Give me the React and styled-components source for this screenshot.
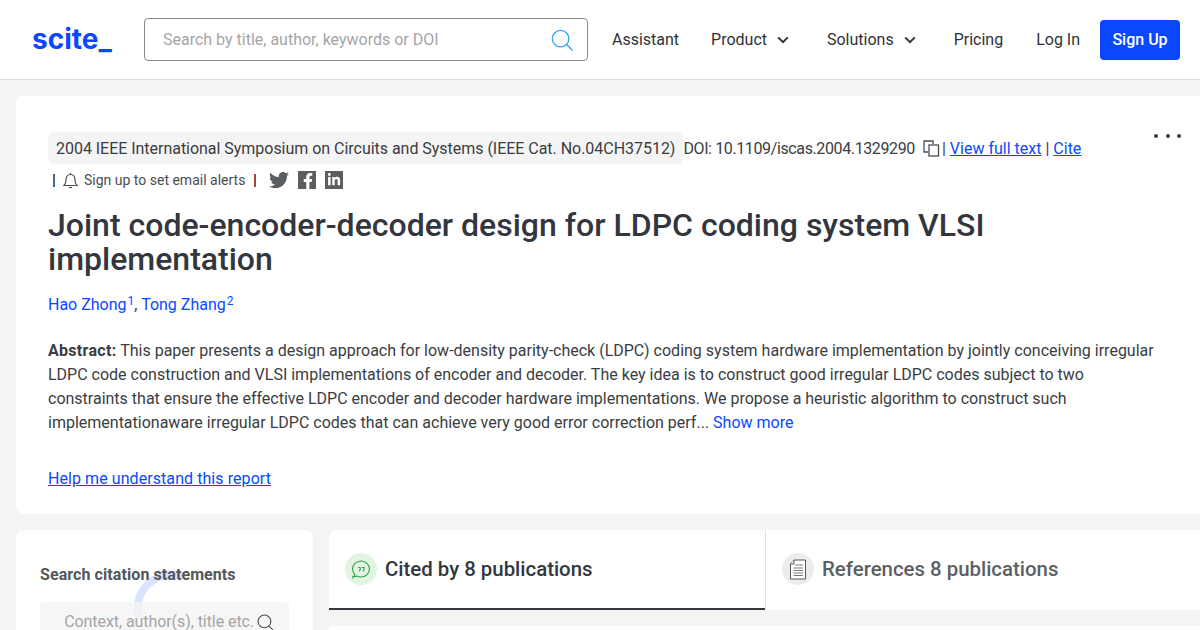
import React from 'react';
import styled, { createGlobalStyle } from 'styled-components';
import { FaTwitter, FaFacebookF, FaLinkedinIn } from 'react-icons/fa';

const GlobalStyle = createGlobalStyle`
  html, body {
    margin: 0;
    padding: 0;
    width: 1200px;
    height: 630px;
    overflow: hidden;
    background: #f4f4f4;
    font-family: "Roboto", "Liberation Sans", sans-serif;
    color: #33373d;
  }
  * { box-sizing: border-box; }
`;

const Header = styled.header`
  height: 80px;
  background: #fff;
  border-bottom: 1px solid #dcdcdc;
  display: flex;
  align-items: center;
  padding: 0 20px 0 32px;
`;

const Logo = styled.div`
  width: 112px;
  font-family: "Inter", sans-serif;
  font-size: 28px;
  font-weight: 700;
  color: #0a48ff;
  letter-spacing: 0;
  transform: translateY(-1px);
`;

const SearchBox = styled.div`
  width: 444px;
  height: 43px;
  border: 1px solid #8a8a8a;
  border-radius: 4px;
  display: flex;
  align-items: center;
  justify-content: space-between;
  padding: 0 14px 0 18px;
  font-size: 16px;
  color: #a5a5a5;
`;

const Nav = styled.nav`
  display: flex;
  align-items: center;
  margin-left: 24px;
  font-size: 16px;
`;

const NavItem = styled.span`
  display: flex;
  align-items: center;
  gap: 10px;
  margin-right: ${(p) => p.$gap}px;
  color: #2f3237;
`;

const SignUp = styled.span`
  width: 80px;
  height: 40px;
  border-radius: 4px;
  background: #0a48ff;
  color: #fff;
  font-weight: 500;
  display: flex;
  align-items: center;
  justify-content: center;
`;

const Page = styled.main`
  padding: 16px 0 0 16px;
  display: flex;
  flex-direction: column;
  gap: 16px;
`;

const PaperCard = styled.section`
  height: 418px;
  background: #fff;
  border-radius: 8px 0 0 8px;
  padding: 36px 32px 0;
  position: relative;
`;

const MetaRow = styled.div`
  display: flex;
  align-items: center;
  font-size: 16px;
  height: 32px;
  color: #3a3d42;
`;

const Venue = styled.span`
  background: #f4f4f4;
  border-radius: 6px;
  height: 32px;
  padding: 0 8px;
  display: flex;
  align-items: center;
  letter-spacing: -0.03px;
`;

const Doi = styled.span`
  letter-spacing: -0.38px;
`;

const CopyIcon = styled.svg`
  margin: 0 2px 0 8px;
`;

const TextLink = styled.a`
  color: #0a48ff;
  text-decoration: underline;
`;

const Pipe = styled.span`
  margin: 0 ${(p) => p.$right ?? 4}px 0 ${(p) => p.$left ?? 4}px;
`;

const MoreDots = styled.div`
  position: absolute;
  top: 38px;
  right: 19px;
  display: flex;
  gap: 7.5px;
`;

const Dot = styled.i`
  width: 4px;
  height: 4px;
  border-radius: 50%;
  background: #3a3d42;
`;

const AlertRow = styled.div`
  display: flex;
  align-items: center;
  height: 32px;
  font-size: 14px;
  color: #4a4d52;
`;

const AlertText = styled.span`
  margin-left: 6px;
`;

const Divider = styled.span`
  width: 2px;
  height: 13px;
  background: ${(p) => p.$color};
  margin: 0 ${(p) => p.$right}px 0 ${(p) => p.$left}px;
`;

const Socials = styled.div`
  display: flex;
  align-items: center;
  gap: 9px;
  color: #5a5e61;
`;

const SocialSquare = styled.span`
  width: 18px;
  height: 18px;
  background: #5a5e61;
  color: #fff;
  display: flex;
  align-items: ${(p) => (p.$bottom ? 'flex-end' : 'center')};
  justify-content: ${(p) => (p.$bottom ? 'flex-end' : 'center')};
  overflow: hidden;
`;

const Title = styled.h1`
  margin: 12px 0 0;
  font-size: 32px;
  line-height: 34px;
  font-weight: 500;
  color: #33373d;
`;

const Authors = styled.div`
  margin-top: 17px;
  font-size: 16px;
  line-height: 24px;
  color: #33373d;
  a { color: #0a48ff; }
`;

const AuthorMark = styled.sup`
  font-size: 12px;
  line-height: 0;
  margin-left: 1px;
  color: #0a48ff;
  vertical-align: 5px;
`;

const Abstract = styled.p`
  margin: 22px 0 0;
  padding-right: 8px;
  font-size: 16px;
  line-height: 24px;
  color: #3a3d42;
  b { font-weight: 700; letter-spacing: 0.3px; }
  a { color: #0a48ff; }
`;

const HelpLink = styled(TextLink)`
  display: block;
  margin-top: 32px;
  font-size: 16px;
  line-height: 24px;
  letter-spacing: 0.07px;
`;

const Lower = styled.div`
  display: flex;
  gap: 16px;
  align-items: flex-start;
`;

const Sidebar = styled.aside`
  width: 297px;
  height: 100px;
  overflow: hidden;
  background: #fff;
  border-radius: 8px 8px 0 0;
  padding: 36px 24px 0;
  position: relative;
`;

const SidebarTitle = styled.div`
  position: relative;
  z-index: 1;
  font-size: 16px;
  line-height: 18px;
  font-weight: 700;
  letter-spacing: 0.08px;
  color: #53565a;
`;

const SidebarSearch = styled.div`
  position: relative;
  z-index: 1;
  margin-top: 18px;
  height: 28px;
  background: rgba(244, 244, 244, 0.8);
  border-radius: 4px 4px 0 0;
  display: flex;
  align-items: flex-start;
  justify-content: flex-end;
  gap: 3px;
  padding: 12px 15px 0 0;
  font-size: 16px;
  line-height: 16px;
  letter-spacing: -0.07px;
  color: #a5a5a5;
`;

const Spinner = styled.svg`
  position: absolute;
  top: 40px;
  left: 117px;
`;

const TabsColumn = styled.div`
  flex: 1;
`;

const Tabs = styled.div`
  display: flex;
  height: 80px;
`;

const Tab = styled.div`
  width: ${(p) => p.$width}px;
  flex: ${(p) => (p.$grow ? 1 : 'none')};
  background: #fff;
  border-radius: ${(p) => (p.$first ? '8px 0 0 0' : '0')};
  border-bottom: 2px solid ${(p) => (p.$active ? '#33373d' : '#fff')};
  border-left: ${(p) => (p.$first ? 'none' : '1px solid #e2e2e2')};
  padding-left: 16px;
  display: flex;
  align-items: center;
  gap: 8px;
  font-size: 20.4px;
  font-weight: 500;
  color: ${(p) => (p.$active ? '#33373d' : '#5c5f63')};
`;

const TabIcon = styled.span`
  width: 32px;
  height: 32px;
  border-radius: 50%;
  background: ${(p) => p.$bg};
  display: flex;
  align-items: center;
  justify-content: center;
`;

const TabPanel = styled.div`
  margin-top: 16px;
  height: 4px;
  background: #fff;
  border-radius: 8px 0 0 0;
`;

function SearchGlass({ size, color, width = 1.5 }) {
  return (
    <svg width={size} height={size} viewBox="0 0 24 24" fill="none" stroke={color} strokeWidth={width} strokeLinecap="round">
      <circle cx="10.5" cy="10.5" r="9" />
      <path d="M17 17l6 6" />
    </svg>
  );
}

function Chevron() {
  return (
    <svg width="12" height="8" viewBox="0 0 12 8" fill="none" stroke="#2f3237" strokeWidth="2">
      <path d="M1.2 1.4L6 6.2l4.8-4.8" />
    </svg>
  );
}

export default function App() {
  return (
    <>
      <GlobalStyle />
      <Header>
        <Logo>scite_</Logo>
        <SearchBox>
          Search by title, author, keywords or DOI
          <SearchGlass size={22} color="#2fa8f5" />
        </SearchBox>
        <Nav>
          <NavItem $gap={32}>Assistant</NavItem>
          <NavItem $gap={38}>Product <Chevron /></NavItem>
          <NavItem $gap={38}>Solutions <Chevron /></NavItem>
          <NavItem $gap={33}>Pricing</NavItem>
          <NavItem $gap={20}>Log In</NavItem>
          <SignUp>Sign Up</SignUp>
        </Nav>
      </Header>
      <Page>
        <PaperCard>
          <MoreDots><Dot /><Dot /><Dot /></MoreDots>
          <MetaRow>
            <Venue>2004 IEEE International Symposium on Circuits and Systems (IEEE Cat. No.04CH37512)</Venue>
            <Doi>DOI: 10.1109/iscas.2004.1329290</Doi>
            <CopyIcon width="17" height="17" viewBox="0 0 17 17" fill="none" stroke="#4a4d52" strokeWidth="1.3">
              <path d="M5 12H1V1h9v3" />
              <rect x="6" y="5" width="9.5" height="11" />
            </CopyIcon>
            <Pipe $left={0} $right={4}>|</Pipe>
            <TextLink>View full text</TextLink>
            <Pipe>|</Pipe>
            <TextLink>Cite</TextLink>
          </MetaRow>
          <AlertRow>
            <Divider $color="#3f6c96" $left={5} $right={8} />
            <svg width="15" height="17" viewBox="0 0 15 17" fill="none" stroke="#4a4d52" strokeWidth="1.2">
              <path d="M1 13.5h13c-1.5-1.4-2-2.5-2-5.5 0-3-1.6-5.5-4.5-5.5S3 5 3 8c0 3-.5 4.1-2 5.5z" />
              <path d="M6 15.5h3" />
              <path d="M7.5 1v1.5" />
            </svg>
            <AlertText>Sign up to set email alerts</AlertText>
            <Divider $color="#a3463c" $left={9} $right={13} />
            <Socials>
              <FaTwitter size={20} />
              <SocialSquare $bottom><FaFacebookF size={16} /></SocialSquare>
              <SocialSquare><FaLinkedinIn size={14} /></SocialSquare>
            </Socials>
          </AlertRow>
          <Title>Joint code-encoder-decoder design for LDPC coding system VLSI implementation</Title>
          <Authors>
            <a>Hao Zhong</a><AuthorMark>1</AuthorMark>, <a>Tong Zhang</a><AuthorMark>2</AuthorMark>
          </Authors>
          <Abstract>
            <b>Abstract:</b> This paper presents a design approach for low-density parity-check (LDPC) coding system hardware implementation by jointly conceiving irregular LDPC code construction and VLSI implementations of encoder and decoder. The key idea is to construct good irregular LDPC codes subject to two constraints that ensure the effective LDPC encoder and decoder hardware implementations. We propose a heuristic algorithm to construct such implementationaware irregular LDPC codes that can achieve very good error correction perf... <a>Show more</a>
          </Abstract>
          <HelpLink>Help me understand this report</HelpLink>
        </PaperCard>
        <Lower>
          <Sidebar>
            <Spinner width="78" height="78" viewBox="0 0 78 78" fill="none" stroke="#d9e5ff" strokeWidth="8">
              <path d="M49.7 6.2A34.5 34.5 0 0 0 5.7 47.9" />
            </Spinner>
            <SidebarTitle>Search citation statements</SidebarTitle>
            <SidebarSearch>
              Context, author(s), title etc.
              <SearchGlass size={17} color="#4a4d52" />
            </SidebarSearch>
          </Sidebar>
          <TabsColumn>
            <Tabs>
              <Tab $first $active $width={436}>
                <TabIcon $bg="#e2f5e2">
                  <svg width="20" height="20" viewBox="0 0 20 20" fill="none" stroke="#2f9e44" strokeWidth="1.1">
                    <path d="M2 18.5l2-3.2C2.6 14 1.5 12.2 1.5 10c0-4.4 3.8-8 8.5-8s8.5 3.6 8.5 8-3.8 8-8.5 8c-1.5 0-3-.3-4.2-1-1 .5-2.3.7-3.8.5z" />
                    <path d="M7.2 8.5h2v2l-1 1.8M11 8.5h2v2l-1 1.8" />
                  </svg>
                </TabIcon>
                Cited by 8 publications
              </Tab>
              <Tab $grow>
                <TabIcon $bg="#ececec">
                  <svg width="18" height="21" viewBox="0 0 18 21" fill="#fff" stroke="#55585c" strokeWidth="1">
                    <path d="M5 1h11.5v19h-15V5z" />
                    <path d="M5 1v4H1.5" />
                    <path d="M6 6h8M4.5 9h9.5M4.5 11.5h9.5M4.5 14h9.5M4.5 16.5h9.5" stroke="#77797c" strokeWidth="1.2" />
                  </svg>
                </TabIcon>
                References 8 publications
              </Tab>
            </Tabs>
            <TabPanel />
          </TabsColumn>
        </Lower>
      </Page>
    </>
  );
}
